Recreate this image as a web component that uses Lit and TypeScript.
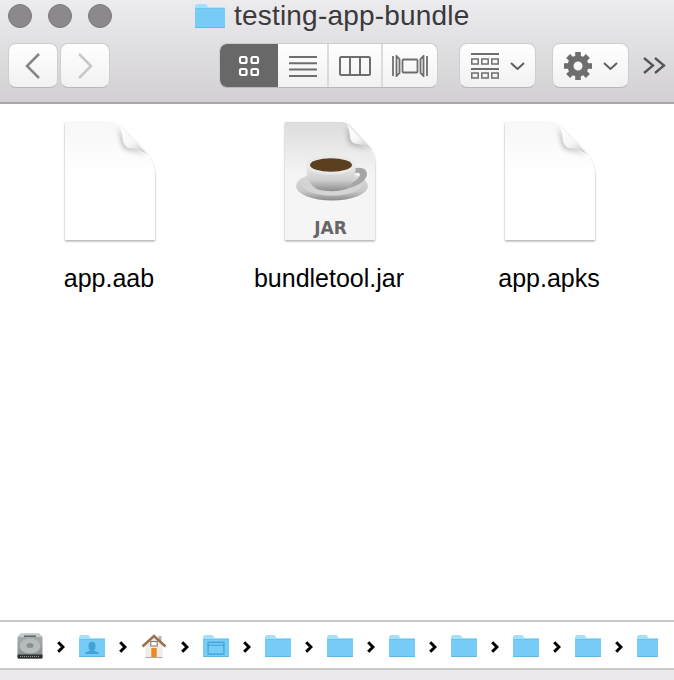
import { LitElement, css, html, svg } from 'lit'
import { customElement } from 'lit/decorators.js'

const folder = (w: number, h: number, glyph: unknown = null) => html`
  <svg width=${w} height=${h} viewBox="1 1 28 22.500" preserveAspectRatio="none">
    <path d="M1 4 Q1 1 3.500 1 H10 Q11.500 1 12.500 2.500 L13.500 4 H29 V22.500 Q29 23.500 28 23.500 H2 Q1 23.500 1 22.500 Z" fill="#a5e0fa" />
    <path d="M1 6 Q1 5 2 5 H28 Q29 5 29 6 V22.500 Q29 23.500 28 23.500 H2 Q1 23.500 1 22.500 Z" fill="#76ccf7" />
    <path d="M1 5.800 Q1 5 2 5 H28 Q29 5 29 5.800 Z" fill="#68c0ec" />
    <path d="M1 22.600 H29 V22.800 Q29 23.500 28 23.500 H2 Q1 23.500 1 22.800 Z" fill="#62b8e4" />
    ${glyph}
  </svg>
`

const userGlyph = svg`<path d="M15 8 Q18.800 8 18.800 12.500 Q18.800 15.500 17.200 17 Q21.500 18 23 20.500 H7 Q8.500 18 12.800 17 Q11.200 15.500 11.200 12.500 Q11.200 8 15 8 Z" fill="#43a3d9" />`
const windowGlyph = svg`<path d="M6.500 8.500 H23.500 V20.500 H6.500 Z M6.500 11.500 H23.500" fill="none" stroke="#3f9fd6" stroke-width="1.200" />`

const disk = html`
  <svg class="soft" width="26" height="26" viewBox="0 0 26 26">
    <defs>
      <linearGradient id="dk" x1="0" y1="0" x2="0" y2="1">
        <stop offset="0" stop-color="#a9afaf" /><stop offset=".8" stop-color="#8d9393" /><stop offset="1" stop-color="#6f7575" />
      </linearGradient>
    </defs>
    <path d="M4 .5 H22 L25.500 4 V24 Q25.500 25.500 24 25.500 H2 Q.5 25.500 .5 24 V4 Z" fill="url(#dk)" />
    <path d="M4 .5 H22 L25.500 4 H.5 Z" fill="#c3c8c8" />
    <ellipse cx="13" cy="13" rx="10.500" ry="7.500" fill="#b6bbbb" />
    <ellipse cx="13" cy="12.500" rx="3.500" ry="2.500" fill="#8a9090" />
    <rect x="7" y="2.500" width="12" height="1.400" fill="#5a5e5e" />
    <rect x=".5" y="21.500" width="25" height="4" rx="1" fill="#2e3131" />
    <path d="M3 23.500 H23" stroke="#a5aaaa" stroke-width=".9" stroke-dasharray="1 1" />
  </svg>
`

const house = html`
  <svg class="soft" width="26" height="24" viewBox="0 0 26 24">
    <path d="M4.500 10 L13 3 L21.500 10 V23.500 H4.500 Z" fill="#ededeb" />
    <rect x="17.500" y="2" width="3" height="6" fill="#b9b3ac" />
    <path d="M1.500 12.500 L13 2 L24.500 12.500" fill="none" stroke="#9b7350" stroke-width="2.600" />
    <rect x="9.800" y="7.500" width="6.400" height="4.500" fill="#fff" stroke="#8d7a66" stroke-width="1.100" />
    <rect x="10.300" y="14" width="5.400" height="9.500" fill="#ee8a1d" />
    <path d="M4.500 23.500 H21.500" stroke="#aaa" stroke-width="1" />
  </svg>
`

const chevron = html`
  <svg class="crumb-sep" width="8" height="12" viewBox="0 0 8 12">
    <path d="M1.200 1.200 L6 6 L1.200 10.800" fill="none" stroke="#000" stroke-width="3" />
  </svg>
`

const page = (id: string, top: string, bottom: string, body: string, fold: string, inner: unknown = null) => html`
  <svg width="100" height="130" viewBox="0 0 100 130">
    <defs>
      <linearGradient id=${id} x1="0" y1="0" x2="0" y2="1">
        <stop offset="0" stop-color=${top} /><stop offset=".45" stop-color=${bottom} /><stop offset="1" stop-color=${bottom} />
      </linearGradient>
      <linearGradient id="${id}-f" x1=".1" y1=".1" x2=".7" y2=".9">
        <stop offset="0" stop-color="#fff" /><stop offset=".6" stop-color="#f6f6f6" /><stop offset="1" stop-color="#cfcfcf" />
      </linearGradient>
      <filter id="${id}-s" x="-10%" y="-10%" width="120%" height="120%">
        <feDropShadow dx="0" dy="1.200" stdDeviation="1.100" flood-color="#000" flood-opacity=".35" />
      </filter>
      <filter id="${id}-b" x="-40%" y="-40%" width="180%" height="180%">
        <feGaussianBlur stdDeviation="2.500" />
      </filter>
    </defs>
    <path d=${body} fill="url(#${id})" filter="url(#${id}-s)" />
    <path d=${fold} fill="#000" opacity=".22" filter="url(#${id}-b)" transform="translate(-2 2)" />
    <path d=${fold} fill="url(#${id}-f)" />
    ${inner}
  </svg>
`

const blankBody = 'M5 4 H48 Q57 4 63 11 L85 33 Q95 43 95 60 V122 H5 Z'
const blankFold = 'M59 7 Q62 12 62.500 20 Q63 30 72 30.500 Q81 31 89 38 Z'
const jarBody = 'M5 4 H61 Q67 4 71 9 L89 28 Q95 35 95 46 V122 H5 Z'
const jarFold = 'M67 6 Q70 12 70 18 Q70 25 77 26 Q86 27 92 32 Z'

const cup = svg`
  <defs>
    <linearGradient id="cupb" x1="0" y1="0" x2="0" y2="1">
      <stop offset="0" stop-color="#f0f0f0" /><stop offset=".6" stop-color="#cdcdcd" /><stop offset="1" stop-color="#8c8c8c" />
    </linearGradient>
    <linearGradient id="sau" x1="0" y1="0" x2="0" y2="1">
      <stop offset="0" stop-color="#e0e0e0" /><stop offset=".7" stop-color="#c6c6c6" /><stop offset="1" stop-color="#8a8a8a" />
    </linearGradient>
  </defs>
  <ellipse cx="52" cy="68" rx="36" ry="14.500" fill="url(#sau)" />
  <ellipse cx="52" cy="66.500" rx="30" ry="11" fill="#d4d4d4" />
  <path d="M72 51 Q87 47 87 57 Q85 66 66 71 L66 67 Q78 63 80 57 Q80 53 72 56 Z" fill="#a6a6a6" />
  <path d="M26.500 46 Q25.500 66 38 71.500 Q52 75 65 71.500 Q76.500 66 75.500 46 Z" fill="url(#cupb)" />
  <ellipse cx="51" cy="46.500" rx="24.500" ry="10" fill="#e9e9e9" />
  <ellipse cx="51" cy="47" rx="21" ry="6.800" fill="#5a3f20" />
  <text x="50.500" y="115.500" text-anchor="middle" font-family="'DejaVu Sans', sans-serif" font-weight="700" font-size="17" fill="#666">JAR</text>
`

const gearTeeth = [0, 45, 90, 135, 180, 225, 270, 315]

@customElement('app-root')
export class AppRoot extends LitElement {
  protected render() {
    return html`
      <div class="bar">
        <div class="title-row">
          <span class="light"></span>
          <span class="light"></span>
          <span class="light"></span>
          <div class="title">${folder(30, 24)}<span>testing-app-bundle</span></div>
        </div>
        <div class="tools">
          <div class="nav">
            <button>
              <svg width="16" height="26" viewBox="0 0 16 26"><path d="M14 1 L2 13 L14 25" fill="none" stroke="#868686" stroke-width="2.500" /></svg>
            </button>
            <button>
              <svg width="16" height="26" viewBox="0 0 16 26"><path d="M2 1 L14 13 L2 25" fill="none" stroke="#c8c8c8" stroke-width="2.500" /></svg>
            </button>
          </div>
          <div class="seg">
            <div class="cell active icons">
              <svg width="22" height="22" viewBox="0 0 22 22" fill="none" stroke="#fff" stroke-width="2.200">
                <rect x="2" y="2" width="6.500" height="6" rx="1.500" /><rect x="13.500" y="2" width="6.500" height="6" rx="1.500" />
                <rect x="2" y="14" width="6.500" height="6" rx="1.500" /><rect x="13.500" y="14" width="6.500" height="6" rx="1.500" />
              </svg>
            </div>
            <div class="cell list">
              <svg width="28" height="22" viewBox="0 0 28 22" stroke="#6e6e6e" stroke-width="2">
                <path d="M0 2 H28 M0 8.300 H28 M0 14.600 H28 M0 21 H28" />
              </svg>
            </div>
            <div class="cell columns">
              <svg width="32" height="20" viewBox="0 0 32 20" fill="none" stroke="#6e6e6e" stroke-width="2">
                <rect x="1" y="1" width="30" height="18" rx="1.500" /><path d="M11 1 V19 M21 1 V19" />
              </svg>
            </div>
            <div class="cell flow">
              <svg width="36" height="22" viewBox="0 0 36 22" fill="none" stroke="#6e6e6e" stroke-width="1.800">
                <rect x="10.500" y="4.500" width="15" height="13" rx="1" />
                <path d="M1 1 V21 M4.500 1 V21 L7.500 18 V4 Z M35 1 V21 M31.500 1 V21 L28.500 18 V4 Z" />
              </svg>
            </div>
          </div>
          <div class="menu first">
            <svg width="28" height="26" viewBox="0 0 28 26" fill="none" stroke="#6e6e6e">
              <path d="M0 1 H28 M0 16 H28" stroke-width="1.800" />
              <g stroke-width="1.500">
                <rect x=".8" y="6" width="6.400" height="5" /><rect x="10.800" y="6" width="6.400" height="5" /><rect x="20.800" y="6" width="6.400" height="5" />
                <rect x=".8" y="20" width="6.400" height="5" /><rect x="10.800" y="20" width="6.400" height="5" /><rect x="20.800" y="20" width="6.400" height="5" />
              </g>
            </svg>
            <svg width="15" height="8" viewBox="0 0 15 8"><path d="M1 1 L7.500 7 L14 1" fill="none" stroke="#5e5e5e" stroke-width="2" /></svg>
          </div>
          <div class="menu">
            <svg width="28" height="28" viewBox="0 0 28 28">
              <circle cx="14" cy="14" r="7.500" fill="none" stroke="#6e6e6e" stroke-width="6" />
              ${gearTeeth.map(a => svg`<rect x="11.200" y="0" width="5.600" height="6" fill="#6e6e6e" transform="rotate(${a} 14 14)" />`)}
            </svg>
            <svg width="15" height="8" viewBox="0 0 15 8"><path d="M1 1 L7.500 7 L14 1" fill="none" stroke="#5e5e5e" stroke-width="2" /></svg>
          </div>
          <svg class="more" width="23" height="17" viewBox="0 0 23 17">
            <path d="M1 1 L10 8.500 L1 16 M12 1 L21 8.500 L12 16" fill="none" stroke="#555" stroke-width="2.300" />
          </svg>
        </div>
      </div>

      <div class="files">
        <div class="file">${page('a', '#f7f7f7', '#fff', blankBody, blankFold)}<span>app.aab</span></div>
        <div class="file">${page('b', '#dcdcdc', '#f5f5f5', jarBody, jarFold, cup)}<span>bundletool.jar</span></div>
        <div class="file">${page('c', '#f7f7f7', '#fff', blankBody, blankFold)}<span>app.apks</span></div>
      </div>

      <div class="path">
        <div class="crumbs">
          ${disk}${chevron}
          ${folder(26, 22, userGlyph)}${chevron}
          ${house}${chevron}
          ${folder(26, 22, windowGlyph)}${chevron}
          ${[0, 1, 2, 3, 4, 5, 6].map(i => html`${folder(26, 22)}${i < 6 ? chevron : null}`)}
        </div>
      </div>
      <div class="foot"></div>
    `
  }

  static styles = css`
    :host {
      display: flex;
      flex-direction: column;
      width: 674px;
      height: 680px;
      background: #fff;
      font-family: 'Liberation Sans', Arial, sans-serif;
      overflow: hidden;
    }

    .bar {
      height: 102px;
      flex: none;
      background: linear-gradient(#ecebee, #d2d0d2);
      border-bottom: 2px solid #a9a8a9;
    }

    .title-row {
      display: flex;
      align-items: center;
      gap: 16px;
      height: 24px;
      padding: 4px 0 0 8px;
    }

    .light {
      width: 24px;
      height: 24px;
      box-sizing: border-box;
      border-radius: 50%;
      background: #8b898d;
      border: 1px solid #7b797c;
    }

    .title {
      display: flex;
      align-items: center;
      gap: 9px;
      margin-left: 67px;
      font-size: 28px;
      letter-spacing: 0.2px;
      color: #3b393b;
    }

    .tools {
      display: flex;
      align-items: center;
      margin-top: 15px;
      padding-left: 8px;
    }

    .nav {
      display: flex;
      gap: 2px;
    }

    button,
    .menu,
    .seg {
      height: 45px;
      box-sizing: border-box;
      background: linear-gradient(#fff, #f1f1f1);
      border: 1px solid #cfcdcf;
      border-bottom-color: #b9b7b9;
      border-radius: 8px;
    }

    button {
      width: 50px;
      padding: 0;
      display: flex;
      align-items: center;
      justify-content: center;
    }

    .seg {
      display: flex;
      width: 219px;
      margin-left: 109px;
      overflow: hidden;
    }

    .cell {
      display: flex;
      align-items: center;
      justify-content: center;
      box-sizing: border-box;
      border-right: 2px solid #dcdcdc;
    }

    .cell:last-child {
      border-right: 0;
    }

    .cell.active {
      background: #686868;
      border-right: 0;
    }

    .icons {
      width: 59px;
    }

    .list {
      width: 51px;
    }

    .columns {
      width: 54px;
    }

    .flow {
      width: 55px;
    }

    .menu {
      display: flex;
      align-items: center;
      justify-content: center;
      gap: 11px;
      width: 77px;
      margin-left: 16px;
    }

    .menu.first {
      margin-left: 21px;
    }

    .more {
      margin-left: 14px;
    }

    .files {
      flex: 1;
      display: flex;
    }

    .file {
      display: flex;
      flex-direction: column;
      align-items: center;
      width: 220px;
      padding-top: 14px;
      font-size: 25px;
      color: #000;
    }

    .file span {
      margin: 17px 2px 0 0;
      line-height: 26px;
    }

    .path {
      flex: none;
      height: 46px;
      border-top: 2px solid #c9c9c9;
      border-bottom: 2px solid #c9c9c9;
    }

    .crumbs {
      display: flex;
      align-items: center;
      gap: 14px;
      box-sizing: border-box;
      height: 46px;
      width: 658px;
      padding: 1px 0 0 17px;
      overflow: hidden;
    }

    .crumbs svg {
      flex: none;
    }

    .crumb-sep {
      margin-top: 2px;
    }

    .soft {
      filter: blur(0.3px);
    }

    .foot {
      flex: none;
      height: 10px;
      background: #ebe9ec;
    }
  `
}
